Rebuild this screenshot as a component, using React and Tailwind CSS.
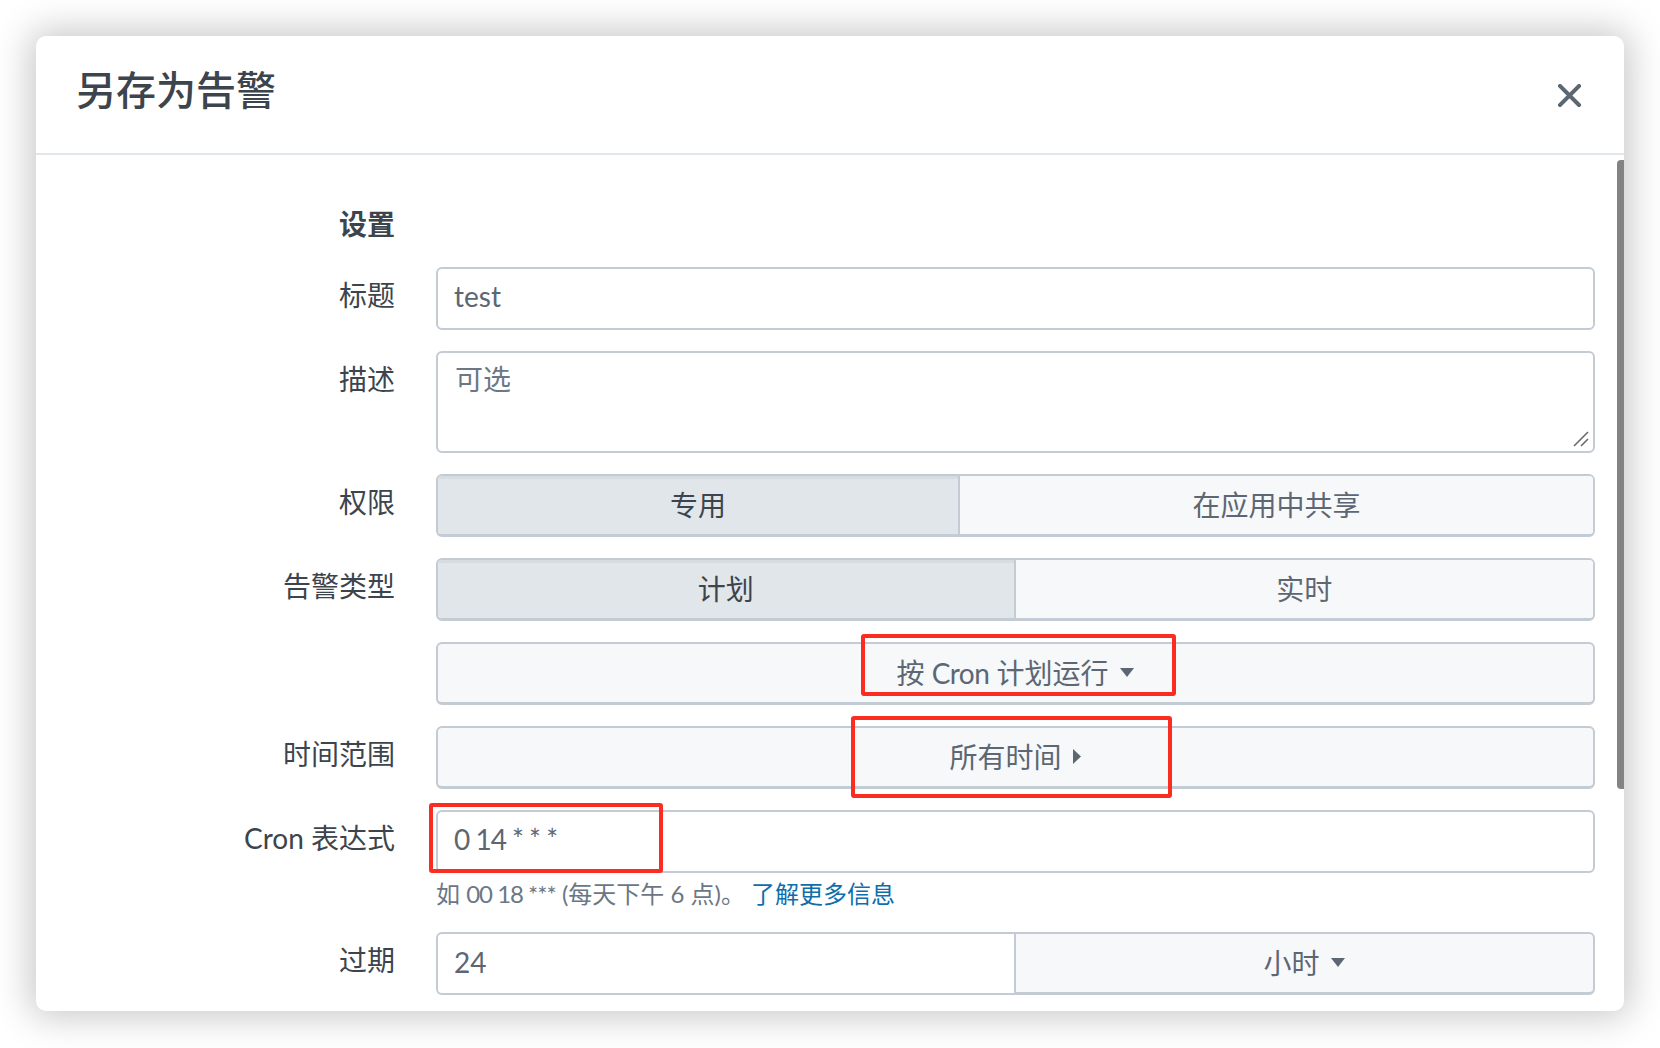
import React from "react";

const CaretDown = () => (
  <svg width="16" height="11" viewBox="0 0 16 11" className="inline-block ml-[10px] mb-[2px]">
    <path d="M1 1 L15 1 L8 10 Z" fill="#5c6773" />
  </svg>
);

const CaretRight = () => (
  <svg width="10" height="17" viewBox="0 0 10 17" className="inline-block ml-[10px] mb-[1px]">
    <path d="M1 1 L9 8.5 L1 16 Z" fill="#5c6773" />
  </svg>
);

function Row({ label, bold, children, className = "" }) {
  return (
    <div className={"flex " + className}>
      <div
        className={
          "w-[359px] shrink-0 text-right pt-[8px] leading-[40px] text-[28px] text-[#3c444d] " +
          (bold ? "font-bold" : "")
        }
      >
        {label}
      </div>
      <div className="ml-[41px] flex-1 relative">{children}</div>
    </div>
  );
}

const RedBox = ({ className }) => (
  <div className={"absolute border-[4px] border-[#fb2c20] rounded-[3px] pointer-events-none " + className} />
);

export default function App() {
  return (
    <div className="w-[1660px] h-[1048px] bg-white overflow-hidden pt-[36px] pl-[36px] font-['Lato','Noto_Sans_CJK_SC',sans-serif]">
      <div className="relative w-[1588px] h-[975px] bg-white rounded-[10px] overflow-hidden shadow-[0_0_36px_6px_rgba(0,0,0,0.22)]">
        {/* header */}
        <div className="h-[119px] border-b-2 border-[#e1e6eb] flex items-center justify-between pl-[40px] pr-[43px]">
          <div className="text-[40px] leading-[48px] text-[#3c444d] font-medium pb-[9px]">另存为告警</div>
          <svg width="23" height="23" viewBox="0 0 23 23" className="mt-[1px]">
            <path d="M2 2 L21 21 M21 2 L2 21" stroke="#5c6773" strokeWidth="4" strokeLinecap="square" />
          </svg>
        </div>

        {/* body */}
        <div className="flex flex-col pt-[49px] pr-[29px]">
          <Row label="设置" bold className="h-[40px] [&>div:first-child]:pt-0" />

          <Row label="标题" className="mt-[23px]">
            <div className="h-[63px] border-2 border-[#c3cbd4] rounded-[6px] bg-white pl-[16px] pb-[5px] flex items-center text-[28px] text-[#5c6773]">
              test
            </div>
          </Row>

          <Row label="描述" className="mt-[21px]">
            <div className="relative h-[102px] border-2 border-[#c3cbd4] rounded-[6px] bg-white pl-[17px] pt-[6px] leading-[40px] text-[28px] text-[#6b7785]">
              可选
              <svg width="18" height="18" viewBox="0 0 18 18" className="absolute right-[3px] bottom-[3px]">
                <path d="M16 2 L2 16 M16 9 L9 16" stroke="#6b6b6b" strokeWidth="1.6" />
              </svg>
            </div>
          </Row>

          <Row label="权限" className="mt-[21px]">
            <div className="h-[63px] flex border-2 border-b-[3px] border-[#c3cbd4] rounded-[6px] overflow-hidden text-[28px]">
              <div className="w-[45.2%] bg-[#e1e6eb] shadow-[inset_0_3px_0_#d6dce2] flex items-center justify-center text-[#3c444d] border-r-2 border-[#c3cbd4]">
                专用
              </div>
              <div className="flex-1 bg-[#f7f8fa] flex items-center justify-center text-[#5c6773]">在应用中共享</div>
            </div>
          </Row>

          <Row label="告警类型" className="mt-[21px]">
            <div className="h-[63px] flex border-2 border-b-[3px] border-[#c3cbd4] rounded-[6px] overflow-hidden text-[28px]">
              <div className="w-[50%] bg-[#e1e6eb] shadow-[inset_0_3px_0_#d6dce2] flex items-center justify-center text-[#3c444d] border-r-2 border-[#c3cbd4]">
                计划
              </div>
              <div className="flex-1 bg-[#f7f8fa] flex items-center justify-center text-[#5c6773]">实时</div>
            </div>
          </Row>

          <Row label="" className="mt-[21px]">
            <div className="h-[63px] border-2 border-b-[3px] border-[#c3cbd4] rounded-[6px] bg-[#f7f8fa] flex items-center justify-center text-[28px] text-[#5c6773]">
              <span>
                按 <span className="tracking-[-0.5px]">Cron</span> 计划运行
              </span>
              <CaretDown />
            </div>
            <RedBox className="left-[425px] top-[-8px] w-[315px] h-[62px]" />
          </Row>

          <Row label="时间范围" className="mt-[21px]">
            <div className="h-[63px] border-2 border-b-[3px] border-[#c3cbd4] rounded-[6px] bg-[#f7f8fa] flex items-center justify-center text-[28px] text-[#5c6773]">
              <span>所有时间</span>
              <CaretRight />
            </div>
            <RedBox className="left-[415px] top-[-10px] w-[321px] h-[82px]" />
          </Row>

          <Row label="Cron 表达式" className="mt-[21px]">
            <div className="h-[63px] border-2 border-[#c3cbd4] rounded-[6px] bg-white pl-[16px] pb-[5px] flex items-center text-[28px] text-[#5c6773] tracking-[-1px]">
              0 14 * * *
            </div>
            <RedBox className="left-[-7px] top-[-7px] w-[234px] h-[70px]" />
          </Row>

          <div className="mt-[5px] ml-[400px] leading-[32px] text-[24px] text-[#6b7785]">
            如 <span className="tracking-[-1px]">00 18 ***</span> (每天下午 6 点)。 <span className="text-[#0d6eab]">了解更多信息</span>
          </div>

          <Row label="过期" className="mt-[22px]">
            <div className="h-[63px] flex text-[28px]">
              <div className="w-[578px] border-2 border-r-0 border-[#c3cbd4] rounded-l-[6px] bg-white pl-[16px] pb-[4px] flex items-center text-[#5c6773]">
                24
              </div>
              <div className="flex-1 border-2 border-b-[3px] border-[#c3cbd4] rounded-r-[6px] bg-[#f7f8fa] flex items-center justify-center text-[#5c6773]">
                <span>小时</span>
                <CaretDown />
              </div>
            </div>
          </Row>
        </div>

        {/* scrollbar */}
        <div className="absolute right-0 top-[124px] w-[7px] h-[629px] bg-[#838383] rounded-l-[4px]" />
      </div>
    </div>
  );
}
